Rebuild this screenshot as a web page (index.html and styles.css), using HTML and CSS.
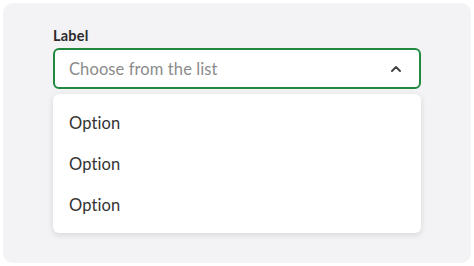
FILE: index.html
```html
<!DOCTYPE html>
<html lang="en">

<head>
    <meta charset="UTF-8">
    <meta name="viewport" content="width=device-width, initial-scale=1.0">
    <title>Select</title>
    <link rel="stylesheet" href="styles.css">
</head>

<body>
    <div class="frame">
        <div class="field">
            <label class="field-label" for="choice">Label</label>
            <!-- 选择框 -->
            <div id="choice" class="select">
                <span class="select-placeholder">Choose from the list</span>
                <svg class="select-arrow" width="14" height="14" viewBox="0 0 14 14">
                    <path d="M3 9 L7 5 L11 9" fill="none" stroke="#444" stroke-width="2" stroke-linecap="round" stroke-linejoin="round" />
                </svg>
            </div>
            <!-- 下拉列表 -->
            <ul class="options">
                <li class="option">Option</li>
                <li class="option">Option</li>
                <li class="option">Option</li>
            </ul>
        </div>
    </div>
</body>

</html>
```

FILE: styles.css
```css
* {
    margin: 0;
    padding: 0;
    box-sizing: border-box;
}

body {
    width: 474px;
    height: 266px;
    background: #ffffff;
    padding: 3px;
    font-family: Lato, "Noto Sans", sans-serif;
}

.frame {
    height: 260px;
    background: #f3f3f6;
    border-radius: 10px;
    padding: 24px 50px 0 50px;
}

.field {
    width: 368px;
}

.field-label {
    display: block;
    font-size: 14.5px;
    font-weight: 700;
    color: #2b2b2b;
    line-height: 18px;
    margin-bottom: 3px;
    letter-spacing: .2px;
}

.select {
    height: 41px;
    border: 2px solid #1f8a3e;
    border-radius: 6px;
    background: #ffffff;
    display: flex;
    align-items: center;
    justify-content: space-between;
    padding: 0 16px 0 14px;
}

.select-placeholder {
    font-size: 16.5px;
    color: #8b8b8b;
    letter-spacing: .1px;
}

.select-arrow {
    display: block;
}

.options {
    list-style: none;
    margin-top: 5px;
    background: #ffffff;
    border-radius: 6px;
    box-shadow: 0 2px 6px rgba(0, 0, 0, .12);
    padding: 9px 0 7px 0;
}

.option {
    height: 41px;
    line-height: 41px;
    padding-left: 16px;
    font-size: 16.5px;
    color: #333333;
    letter-spacing: .1px;
}
```
